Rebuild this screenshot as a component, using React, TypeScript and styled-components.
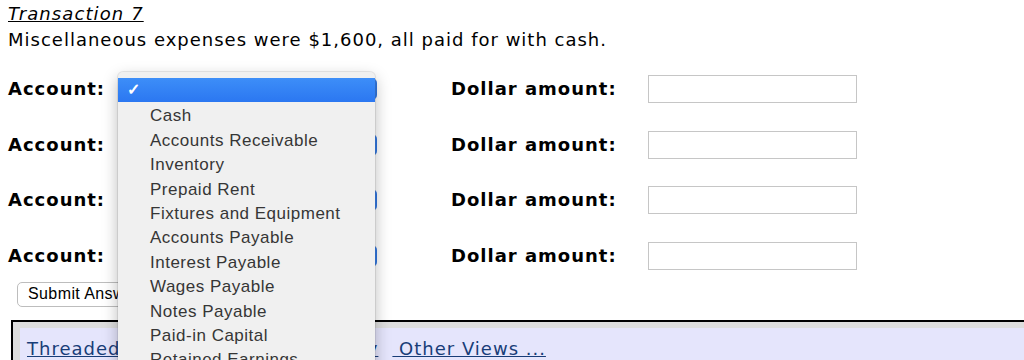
import React from 'react'
import styled, { createGlobalStyle } from 'styled-components'

const GlobalStyle = createGlobalStyle`
  html, body {
    margin: 0;
    padding: 0;
    background: #ffffff;
    overflow: hidden;
  }
  body {
    padding: 1px 0 0 8px;
    font-family: "DejaVu Sans", Verdana, sans-serif;
    font-size: 18px;
    line-height: 26px;
    letter-spacing: 1px;
    color: #000;
  }
`

const Title = styled.div`
  font-style: italic;
  text-decoration: underline;
  letter-spacing: 1.1px;
`

const Description = styled.div``

const Rows = styled.div`
  position: relative;
  display: flex;
  flex-direction: column;
  gap: 27.6px;
  margin-top: 22px;
`

const Row = styled.div`
  display: flex;
  align-items: center;
  height: 28px;
`

const Label = styled.label<{ $width: number }>`
  width: ${p => p.$width}px;
  flex-shrink: 0;
  font-weight: bold;
`

const SelectBox = styled.div`
  width: 259px;
  height: 22px;
  border-radius: 5px;
  border: 1px solid #b9b9b9;
  border-right-color: #2f74e0;
  box-sizing: border-box;
  background: linear-gradient(to right, #fff calc(100% - 20px), #3b86f2 calc(100% - 20px));
  margin-right: 74px;
  flex-shrink: 0;
`

const AmountInput = styled.input`
  width: 209px;
  height: 28px;
  box-sizing: border-box;
  border: 1px solid #c6c6c6;
  background: #fff;
  padding: 0 4px;
  font-size: 16px;
`

const Menu = styled.div`
  position: absolute;
  left: 110px;
  top: -3px;
  width: 257px;
  height: 320px;
  background: #f0f0f0;
  border-radius: 5px;
  box-shadow: 0 6px 16px rgba(0, 0, 0, 0.28), 0 0 0 1px rgba(0, 0, 0, 0.08);
  padding-top: 6px;
  box-sizing: border-box;
  font-family: "Liberation Sans", Arial, sans-serif;
  font-size: 17px;
  letter-spacing: 0.5px;
  z-index: 10;
`

const MenuItem = styled.div<{ $selected?: boolean }>`
  position: relative;
  height: 24.4px;
  line-height: 24.4px;
  padding-left: 32px;
  color: ${p => (p.$selected ? '#fff' : '#363636')};
  background: ${p => (p.$selected ? 'linear-gradient(to bottom, #3d8ef8, #2b77f1)' : 'transparent')};
`

const ItemText = styled.span`
  position: relative;
  top: 2px;
`

const Check = styled.span`
  position: absolute;
  left: 9px;
  top: 0;
  font-size: 16px;
  font-weight: bold;
  color: #fff;
`

const SubmitButton = styled.button`
  margin: 12px 0 0 9px;
  height: 25px;
  padding: 0 10px;
  border: 1px solid #bdbdbd;
  border-radius: 5px;
  background: #fff;
  font-family: "Liberation Sans", Arial, sans-serif;
  font-size: 16px;
  letter-spacing: 0.4px;
  color: #000;
`

const ViewsBox = styled.div`
  margin: 13px 0 0 3px;
  width: 1030px;
  border: 2px solid #000;
  border-bottom: none;
  background: #dedede;
  padding: 6px 0 0 7px;
  box-sizing: border-box;
`

const ViewsCell = styled.div`
  background: #e5e5fc;
  height: 40px;
  padding: 8px 0 0 7px;
  box-sizing: border-box;
  display: flex;
`

const ViewLink = styled.a<{ $gap?: number }>`
  margin-left: ${p => p.$gap ?? 0}px;
  color: #183d78;
  text-decoration: underline;
  white-space: pre;
`

const accounts = [
  'Cash',
  'Accounts Receivable',
  'Inventory',
  'Prepaid Rent',
  'Fixtures and Equipment',
  'Accounts Payable',
  'Interest Payable',
  'Wages Payable',
  'Notes Payable',
  'Paid-in Capital',
  'Retained Earnings',
]

export default function App() {
  return (
    <>
      <GlobalStyle />
      <Title>Transaction 7</Title>
      <Description>Miscellaneous expenses were $1,600, all paid for with cash.</Description>
      <Rows>
        {[0, 1, 2, 3].map(i => (
          <Row key={i}>
            <Label $width={110}>Account:</Label>
            <SelectBox />
            <Label $width={197}>Dollar amount:</Label>
            <AmountInput type="text" />
          </Row>
        ))}
        <Menu>
          <MenuItem $selected>
            <Check>✓</Check>
          </MenuItem>
          {accounts.map(a => (
            <MenuItem key={a}>
              <ItemText>{a}</ItemText>
            </MenuItem>
          ))}
        </Menu>
      </Rows>
      <SubmitButton>Submit Answer</SubmitButton>
      <ViewsBox>
        <ViewsCell>
          <ViewLink href="#">Threaded View</ViewLink>
          <ViewLink href="#" $gap={92}>Chronology</ViewLink>
          <ViewLink href="#" $gap={14}> Other Views ...</ViewLink>
        </ViewsCell>
      </ViewsBox>
    </>
  )
}
